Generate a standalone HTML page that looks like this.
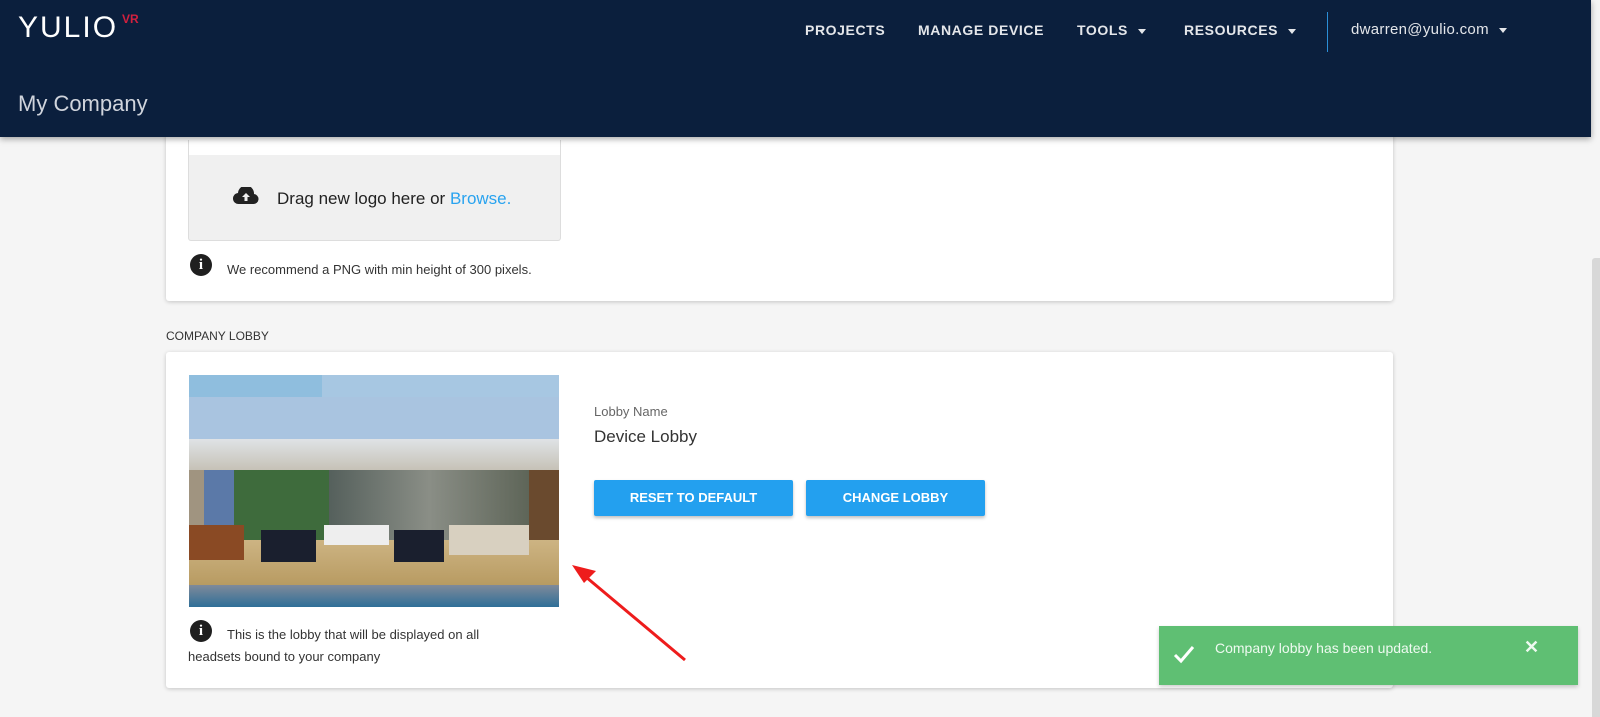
<!DOCTYPE html>
<html><head><style>
*{margin:0;padding:0;box-sizing:border-box}
body{width:1600px;height:717px;overflow:hidden;background:#f5f5f5;font-family:"Liberation Sans",Roboto,sans-serif;position:relative}
.hdr{position:absolute;left:0;top:0;width:1591px;height:137px;background:#0b1f3d;box-shadow:0 2px 6px rgba(0,0,0,.35);z-index:5}
.abs{position:absolute}
.nav{color:#e4e6ea;font-size:14px;font-weight:bold;letter-spacing:0.6px;top:22px}
.caret{display:inline-block;width:0;height:0;border-left:4px solid transparent;border-right:4px solid transparent;border-top:5px solid #e4e6ea;margin-left:10px;vertical-align:middle}
.card{position:absolute;background:#fff;border-radius:3px;box-shadow:0 1px 4px rgba(0,0,0,.2)}
.btn{position:absolute;top:480px;height:36px;background:#23a0ef;color:#fff;font-size:13px;font-weight:bold;text-align:center;line-height:36px;border-radius:2px;box-shadow:0 2px 3px rgba(0,0,0,.25)}
.info{position:absolute;width:22px;height:22px;border-radius:50%;background:#1f1f1f;color:#fff;font:bold 15px "Liberation Serif",serif;text-align:center;line-height:22px}
</style></head><body>
<div class="hdr">
 <div class="abs" style="left:18px;top:11px;color:#fff;font-size:30px;letter-spacing:2px;font-weight:300">YULIO</div>
 <div class="abs" style="left:122px;top:12px;color:#d2203e;font-size:12px;font-weight:bold">VR</div>
 <div class="abs" style="left:18px;top:91px;color:#d0d4dc;font-size:22px">My Company</div>
 <div class="abs nav" style="left:805px">PROJECTS</div>
 <div class="abs nav" style="left:918px">MANAGE DEVICE</div>
 <div class="abs nav" style="left:1077px">TOOLS<span class="caret"></span></div>
 <div class="abs nav" style="left:1184px">RESOURCES<span class="caret"></span></div>
 <div class="abs" style="left:1327px;top:12px;width:1px;height:40px;background:#2b8fd8"></div>
 <div class="abs nav" style="left:1351px;font-weight:normal;font-size:15px;top:21px;letter-spacing:0.3px">dwarren@yulio.com<span class="caret"></span></div>
</div>
<div class="abs" style="left:1592px;top:258px;width:8px;height:459px;background:#d8d8d8;border-radius:3px 0 0 0"></div>

<div class="card" style="left:166px;top:100px;width:1227px;height:201px">
 <div class="abs" style="left:22px;top:40px;width:373px;height:101px;border:1px solid #ddd;border-top:none;background:#f0f0f0;border-radius:0 0 3px 3px">
  <div class="abs" style="left:0;top:0;width:371px;height:15px;background:#fff"></div>
  <svg class="abs" style="left:44px;top:47px" width="26" height="18" viewBox="0 0 26 18"><path d="M6 17h14a5 5 0 0 0 1-10A8 8 0 0 0 5 6a5.5 5.5 0 0 0 1 11z" fill="#222"/><path d="M13 6l-4 4h2.5v4h3v-4H17z" fill="#f0f0f0"/></svg>
  <div class="abs" style="left:88px;top:49px;font-size:17px;color:#222">Drag new logo here or <span style="color:#29a3ef">Browse.</span></div>
 </div>
 <div class="info" style="left:24px;top:154px">i</div>
 <div class="abs" style="left:61px;top:162px;font-size:13px;color:#333">We recommend a PNG with min height of 300 pixels.</div>
</div>

<div class="abs" style="left:166px;top:329px;font-size:12px;color:#333">COMPANY LOBBY</div>

<div class="card" style="left:166px;top:352px;width:1227px;height:336px">
 <div class="abs" style="left:23px;top:23px;width:370px;height:232px;overflow:hidden;background:#c9b37f">
  <div class="abs" style="left:0;top:0;width:370px;height:22px;background:linear-gradient(90deg,#8fbede 0 36%,#a7c7e2 36%)"></div>
  <div class="abs" style="left:0;top:22px;width:370px;height:42px;background:#a9c4e0"></div>
  <div class="abs" style="left:0;top:64px;width:370px;height:40px;background:linear-gradient(#dfe3e6,#bfb8a9)"></div>
  <div class="abs" style="left:0;top:95px;width:150px;height:70px;background:linear-gradient(90deg,#a09480 0 10%,#5b79a8 10% 30%,#3e6b3c 30%)"></div>
  <div class="abs" style="left:140px;top:95px;width:200px;height:70px;background:linear-gradient(90deg,#55605c,#8a8e86 50%,#5e6558)"></div>
  <div class="abs" style="left:340px;top:95px;width:30px;height:120px;background:#6a4a2e"></div>
  <div class="abs" style="left:0;top:165px;width:370px;height:45px;background:linear-gradient(#cdb483,#b89b62)"></div>
  <div class="abs" style="left:72px;top:155px;width:55px;height:32px;background:#1a1f2e"></div>
  <div class="abs" style="left:135px;top:150px;width:65px;height:20px;background:#eee"></div>
  <div class="abs" style="left:205px;top:155px;width:50px;height:32px;background:#1a1f2e"></div>
  <div class="abs" style="left:260px;top:150px;width:80px;height:30px;background:#d8d0c0"></div>
  <div class="abs" style="left:0;top:150px;width:55px;height:35px;background:#8a4a24"></div>
  <div class="abs" style="left:0;top:210px;width:370px;height:22px;background:linear-gradient(#7f8a9a,#2f6f98)"></div>
 </div>
 <div class="abs" style="left:428px;top:52px;font-size:13px;color:#666">Lobby Name</div>
 <div class="abs" style="left:428px;top:75px;font-size:17px;color:#333">Device Lobby</div>
 <div class="info" style="left:24px;top:268px">i</div>
 <div class="abs" style="left:61px;top:275px;font-size:13px;color:#333">This is the lobby that will be displayed on all</div>
 <div class="abs" style="left:22px;top:297px;font-size:13px;color:#333">headsets bound to your company</div>
</div>
<div class="btn" style="left:594px;width:199px">RESET TO DEFAULT</div>
<div class="btn" style="left:806px;width:179px">CHANGE LOBBY</div>

<svg class="abs" style="left:560px;top:555px" width="140" height="115"><line x1="125" y1="105" x2="20" y2="17" stroke="#ee1c1c" stroke-width="3"/><path d="M12 10l24 6-12 12z" fill="#ee1c1c"/></svg>

<div class="abs" style="left:1159px;top:626px;width:419px;height:59px;background:#5fbf73;box-shadow:0 2px 4px rgba(0,0,0,.2)">
 <svg class="abs" style="left:14px;top:17px" width="22" height="22"><path d="M2 12l6 6L20 4" stroke="#fff" stroke-width="3" fill="none"/></svg>
 <div class="abs" style="left:56px;top:14px;font-size:14px;color:#eefaf0">Company lobby has been updated.</div>
 <div class="abs" style="left:365px;top:11px;font-size:18px;color:#eefaf0;font-weight:bold">✕</div>
</div>
</body></html>
